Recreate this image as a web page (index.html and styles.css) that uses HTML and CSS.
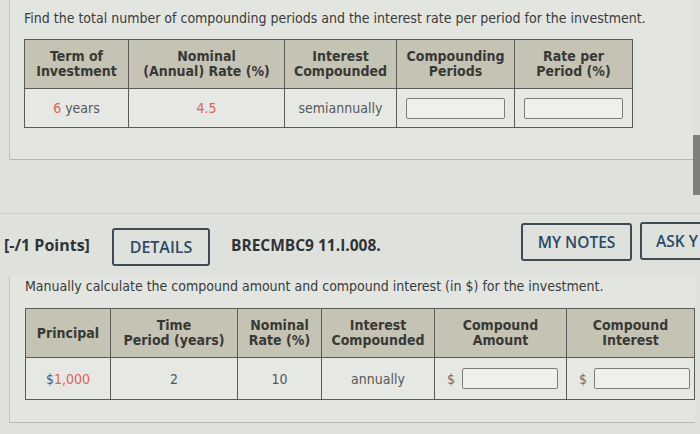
FILE: index.html
```html
<!DOCTYPE html>
<html>
<head>
<meta charset="utf-8">
<link rel="stylesheet" href="styles.css">
</head>
<body>
<div class="page">
  <section class="panel panel-top">
    <p class="prompt">Find the total number of compounding periods and the interest rate per period for the investment.</p>
    <table class="grid grid-one">
      <colgroup>
        <col class="c104"><col class="c156"><col class="c112"><col class="c118"><col class="c118">
      </colgroup>
      <thead>
        <tr>
          <th>Term of<br>Investment</th>
          <th>Nominal<br>(Annual) Rate (%)</th>
          <th>Interest<br>Compounded</th>
          <th>Compounding<br>Periods</th>
          <th>Rate per<br>Period (%)</th>
        </tr>
      </thead>
      <tbody>
        <tr>
          <td><span class="red">6</span> years</td>
          <td><span class="red">4.5</span></td>
          <td>semiannually</td>
          <td><span class="field"></span></td>
          <td><span class="field"></span></td>
        </tr>
      </tbody>
    </table>
  </section>

  <div class="scroll-thumb"></div>

  <div class="spacer"></div>

  <header class="qbar">
    <span class="points">[-/1 Points]</span>
    <span class="btn btn-details">DETAILS</span>
    <span class="qid">BRECMBC9 11.I.008.</span>
    <span class="grow"></span>
    <span class="btn btn-notes">MY NOTES</span>
    <span class="btn btn-ask">ASK Y</span>
  </header>

  <section class="panel panel-bottom">
    <p class="prompt prompt-two">Manually calculate the compound amount and compound interest (in $) for the investment.</p>
    <table class="grid grid-two">
      <colgroup>
        <col class="d85"><col class="d127"><col class="d84"><col class="d113"><col class="d132"><col class="d128">
      </colgroup>
      <thead>
        <tr>
          <th>Principal</th>
          <th>Time<br>Period (years)</th>
          <th>Nominal<br>Rate (%)</th>
          <th>Interest<br>Compounded</th>
          <th>Compound<br>Amount</th>
          <th>Compound<br>Interest</th>
        </tr>
      </thead>
      <tbody>
        <tr>
          <td>$<span class="red">1,000</span></td>
          <td>2</td>
          <td>10</td>
          <td>annually</td>
          <td class="money"><span class="dollar">$</span><span class="field field-sm"></span></td>
          <td class="money"><span class="dollar">$</span><span class="field field-sm"></span></td>
        </tr>
      </tbody>
    </table>
  </section>
</div>
</body>
</html>
```

FILE: styles.css
```css
html, body {
  margin: 0;
  padding: 0;
}
body {
  width: 700px;
  height: 434px;
  overflow: hidden;
  background: #dfe2dc;
  font-family: "DejaVu Sans Condensed", "DejaVu Sans", sans-serif;
  color: #3b3e3e;
}
.page {
  position: relative;
  width: 700px;
  height: 434px;
}
.panel {
  box-sizing: border-box;
}
.panel-top {
  margin-left: 9px;
  width: 684px;
  height: 160px;
  border-left: 1px solid #c3c6c0;
  border-bottom: 1px solid #b5b8b2;
  padding: 9px 0 0 14px;
  background: #e3e6e0;
}
.prompt {
  margin: 0;
  font-size: 14px;
  line-height: 18px;
  color: #383b3b;
  white-space: nowrap;
}
.grid {
  border-collapse: collapse;
  table-layout: fixed;
  font-size: 14px;
}
.grid-one {
  margin-top: 12px;
  width: 608px;
}
.grid th, .grid td {
  border: 1.5px solid #5a5b57;
  text-align: center;
  padding: 0;
}
.grid th {
  background: #c5c3b4;
  font-weight: bold;
  line-height: 15px;
  color: #383934;
}
.grid td {
  background: #e6e8e3;
  color: #55585a;
}
.grid-one th { height: 48px; }
.grid-one td { height: 38px; }
.c104 { width: 104px; }
.c156 { width: 156px; }
.c112 { width: 112px; }
.c118 { width: 118px; }
.red { color: #e06257; }
.field {
  display: inline-block;
  vertical-align: middle;
  box-sizing: border-box;
  width: 99px;
  height: 21px;
  background: #efefec;
  border: 1.5px solid #7b7e7b;
  border-radius: 2px;
}
.scroll-thumb {
  position: absolute;
  left: 693px;
  top: 135px;
  width: 7px;
  height: 60px;
  background: #7c7f7c;
}
.spacer {
  height: 53px;
  border-bottom: 1px solid #c9ccc6;
}
.qbar {
  display: flex;
  align-items: center;
  height: 62px;
  padding-left: 4px;
  font-family: "Open Sans", "DejaVu Sans", sans-serif;
}
.points {
  font-size: 16px;
  font-weight: bold;
  color: #2f3336;
  width: 108px;
}
.btn {
  box-sizing: border-box;
  display: flex;
  align-items: center;
  justify-content: center;
  height: 38px;
  border: 2px solid #3e4a54;
  border-radius: 3px;
  font-size: 15.5px;
  font-weight: 600;
  color: #2b4a67;
}
.btn-details {
  width: 98px;
  margin-top: 3px;
  font-size: 16px;
}
.qid {
  margin-left: 21px;
  font-size: 15.5px;
  font-weight: bold;
  color: #2f3336;
}
.grow { flex: 1; }
.btn-notes {
  width: 111px;
  margin-top: -7px;
}
.btn-ask {
  width: 70px;
  margin-left: 8px;
  margin-right: -10px;
  margin-top: -8px;
  justify-content: flex-start;
  padding-left: 14px;
}
.panel-bottom {
  margin-left: 9px;
  width: 686px;
  height: 147px;
  border-left: 1px solid #c3c6c0;
  border-bottom: 1px solid #b5b8b2;
  padding: 0 0 0 15px;
  background: #e3e6e0;
}
.prompt-two {
  padding-top: 1px;
}
.grid-two {
  margin-top: 13px;
  width: 669px;
}
.grid-two th { height: 48px; }
.grid-two td { height: 41px; }
.d85 { width: 85px; }
.d127 { width: 127px; }
.d84 { width: 84px; }
.d113 { width: 113px; }
.d132 { width: 132px; }
.d128 { width: 128px; }
.grid td.money {
  text-align: left;
  padding-left: 12px;
}
.dollar {
  display: inline-block;
  width: 15px;
  vertical-align: middle;
  color: #6a6d6f;
}
.field-sm {
  width: 96px;
}
```
